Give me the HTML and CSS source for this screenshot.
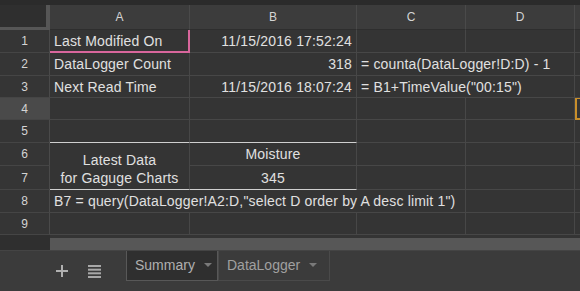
FILE: index.html
```html
<!DOCTYPE html>
<html lang="en">
  <head>
    <meta charset="UTF-8" />
    <title>Summary - Sheet</title>
    <link rel="stylesheet" href="styles.css">
  </head>
  <body>
    <div class="topstrip"></div>

    <div class="sheet">
      <!-- column headers -->
      <div class="corner"></div>
      <div class="colhdr">A</div>
      <div class="colhdr">B</div>
      <div class="colhdr">C</div>
      <div class="colhdr">D</div>
      <div class="colhdr edge"></div>

      <!-- row 1 -->
      <div class="rowhdr">1</div>
      <div class="cell active">Last Modified On</div>
      <div class="cell num">11/15/2016 17:52:24</div>
      <div class="cell"></div>
      <div class="cell"></div>
      <div class="cell edge"></div>

      <!-- row 2 -->
      <div class="rowhdr">2</div>
      <div class="cell">DataLogger Count</div>
      <div class="cell num">318</div>
      <div class="cell span2">= counta(DataLogger!D:D) - 1</div>
      <div class="cell edge"></div>

      <!-- row 3 -->
      <div class="rowhdr">3</div>
      <div class="cell">Next Read Time</div>
      <div class="cell num">11/15/2016 18:07:24</div>
      <div class="cell span2">= B1+TimeValue("00:15")</div>
      <div class="cell edge"></div>

      <!-- row 4 -->
      <div class="rowhdr selected">4</div>
      <div class="cell"></div>
      <div class="cell"></div>
      <div class="cell"></div>
      <div class="cell"></div>
      <div class="cell edge picked"></div>

      <!-- row 5 -->
      <div class="rowhdr">5</div>
      <div class="cell rule"></div>
      <div class="cell rule"></div>
      <div class="cell"></div>
      <div class="cell"></div>
      <div class="cell edge"></div>

      <!-- rows 6-7 -->
      <div class="rowhdr">6</div>
      <div class="cell merged rule">Latest Data<br />for Gaguge Charts</div>
      <div class="cell mid">Moisture</div>
      <div class="cell"></div>
      <div class="cell"></div>
      <div class="cell edge"></div>

      <div class="rowhdr">7</div>
      <div class="cell mid rule">345</div>
      <div class="cell"></div>
      <div class="cell"></div>
      <div class="cell edge"></div>

      <!-- row 8 -->
      <div class="rowhdr">8</div>
      <div class="cell span3">B7 = query(DataLogger!A2:D,"select D order by A desc limit 1")</div>
      <div class="cell"></div>
      <div class="cell edge"></div>

      <!-- row 9 -->
      <div class="rowhdr">9</div>
      <div class="cell"></div>
      <div class="cell"></div>
      <div class="cell"></div>
      <div class="cell"></div>
      <div class="cell edge"></div>
    </div>

    <div class="scrollrow">
      <div class="scroll-left"></div>
      <div class="scroll-track"></div>
    </div>

    <div class="tabbar">
      <div class="tools">
        <svg class="tool" width="12" height="12" viewBox="0 0 12 12">
          <rect x="5" y="0" width="2" height="12" fill="#b0b0b0" />
          <rect x="0" y="5" width="12" height="2" fill="#b0b0b0" />
        </svg>
        <svg class="tool" width="13" height="13" viewBox="0 0 13 13">
          <rect x="0" y="0" width="13" height="2" fill="#a8a8a8" />
          <rect x="0" y="3.7" width="13" height="2" fill="#a8a8a8" />
          <rect x="0" y="7.3" width="13" height="2" fill="#a8a8a8" />
          <rect x="0" y="11" width="13" height="2" fill="#a8a8a8" />
        </svg>
      </div>
      <div class="tab current">Summary <span class="caret"></span></div>
      <div class="tab">DataLogger <span class="caret"></span></div>
    </div>
  </body>
</html>
```

FILE: styles.css
```css
body {
  margin: 0;
  width: 580px;
  height: 291px;
  overflow: hidden;
  background: #343434;
  font-family: "Liberation Sans", Arial, sans-serif;
  color: #e0e0e0;
}
.topstrip {
  height: 5px;
  background: #2b2b2b;
}
.sheet {
  display: grid;
  grid-template-columns: 50px 140px 167px 109px 109px 5px;
  grid-template-rows: 25px 23px 23px 22px 22px 23px 23px 24px 23px 22px;
}
.sheet > div {
  box-sizing: border-box;
}
.corner {
  background: #2f2f2f;
  border-right: 4px solid #565656;
  border-bottom: 3px solid #565656;
}
.colhdr {
  background: #3c3c3c;
  border-right: 1px solid #4a4a4a;
  border-bottom: 1px solid #2e2e2e;
  color: #d4d4d4;
  font-size: 12px;
  display: flex;
  align-items: center;
  justify-content: center;
}
.rowhdr {
  background: #353535;
  border-right: 1px solid #4a4a4a;
  border-bottom: 1px solid #454545;
  color: #d4d4d4;
  font-size: 12px;
  display: flex;
  align-items: center;
  justify-content: center;
}
.rowhdr.selected {
  background: #4a4a4a;
}
.cell {
  background: #343434;
  border-right: 1px solid #474747;
  border-bottom: 1px solid #474747;
  font-size: 14px;
  letter-spacing: 0.17px;
  padding: 0 4px;
  white-space: nowrap;
  display: flex;
  align-items: center;
}
.edge {
  border-right: none;
  padding: 0;
}
.num {
  justify-content: flex-end;
}
.mid {
  justify-content: center;
}
.span2 {
  grid-column: span 2;
}
.span3 {
  grid-column: span 3;
}
.merged {
  grid-row: span 2;
  flex-direction: column;
  justify-content: flex-end;
  align-items: center;
  text-align: center;
  line-height: 18px;
  padding-bottom: 2px;
}
.active {
  border-right: 2px solid #d8669c;
  border-bottom: 2px solid #d8669c;
}
.rule {
  border-bottom: 1px solid #cfcfcf;
}
.picked {
  border-left: 2px solid #c98f2b;
  border-top: 1px solid #c98f2b;
  border-bottom: 2px solid #c98f2b;
}
.scrollrow {
  display: flex;
  height: 15px;
}
.scroll-left {
  width: 50px;
  background: #2f2f2f;
}
.scroll-track {
  flex: 1;
  margin-top: 3px;
  background: #575757;
}
.tabbar {
  display: flex;
  height: 41px;
  background: #3b3b3b;
  border-top: 1px solid #444;
  box-sizing: border-box;
}
.tools {
  width: 126px;
  display: flex;
  align-items: center;
  gap: 20px;
  padding-left: 56px;
  box-sizing: border-box;
}
.tab {
  margin-bottom: 10px;
  padding: 0 12px 2px 8px;
  border: 1px solid #4a4a4a;
  border-top: none;
  color: #a0a0a0;
  font-size: 14px;
  display: flex;
  align-items: center;
  gap: 9px;
}
.tab.current {
  background: #2f2f2f;
  border-color: #585858;
  color: #b0b0b0;
  width: 92px;
  box-sizing: border-box;
}
.caret {
  width: 0;
  height: 0;
  border-left: 4px solid transparent;
  border-right: 4px solid transparent;
  border-top: 4px solid #7a7a7a;
}
```
